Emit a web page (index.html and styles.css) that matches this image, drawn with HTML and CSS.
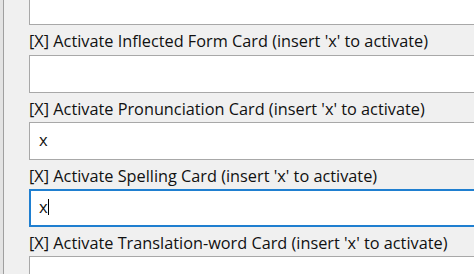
FILE: index.html
```html
<!DOCTYPE html>
<html>
<head>
<meta charset="utf-8">
<link rel="stylesheet" href="styles.css">
</head>
<body>
<div class="frame">
  <div class="edge"></div>
  <div class="rule"></div>
  <div class="content">
    <div class="box cut"></div>
    <div class="label first">[X] Activate Inflected Form Card (insert 'x' to activate)</div>
    <div class="box"></div>
    <div class="label">[X] Activate Pronunciation Card (insert 'x' to activate)</div>
    <div class="box"><span class="val">x</span></div>
    <div class="label">[X] Activate Spelling Card (insert 'x' to activate)</div>
    <div class="box focus"><span class="val">x</span><span class="caret"></span></div>
    <div class="label">[X] Activate Translation-word Card (insert 'x' to activate)</div>
    <div class="box tail"></div>
  </div>
</div>
</body>
</html>
```
FILE: styles.css
```css
html, body {
  margin: 0;
  padding: 0;
}
body {
  width: 474px;
  height: 274px;
  overflow: hidden;
  background: #f0f0f0;
  font-family: "Open Sans", "Noto Sans", sans-serif;
  color: #111;
}
.frame {
  display: flex;
  height: 274px;
}
.edge {
  width: 3px;
  background: #e3e3e3;
}
.rule {
  width: 1px;
  background: #9f9f9f;
}
.content {
  flex: 1;
  padding-left: 25px;
  display: flex;
  flex-direction: column;
  min-width: 0;
}
.box {
  box-sizing: border-box;
  height: 38px;
  background: #fff;
  border: 1px solid #a8a8a8;
  border-right: none;
  flex: none;
  display: flex;
  align-items: flex-start;
  padding: 7px 0 0 9px;
  font-size: 16.5px;
  line-height: 20px;
}
.box.cut {
  height: 25px;
  border-top: none;
}
.box.focus {
  border: 2px solid #1f7fd0;
  border-right: none;
  padding: 6px 0 0 8px;
}
.box.tail {
  flex: 1;
  border-bottom: none;
}
.label {
  box-sizing: border-box;
  height: 29px;
  flex: none;
  font-size: 16.3px;
  line-height: 25px;
  padding-top: 4px;
  white-space: nowrap;
}
.label.first {
  height: 30px;
}
.caret {
  display: inline-block;
  width: 1px;
  height: 16px;
  margin-top: 2px;
  background: #000;
}
```
